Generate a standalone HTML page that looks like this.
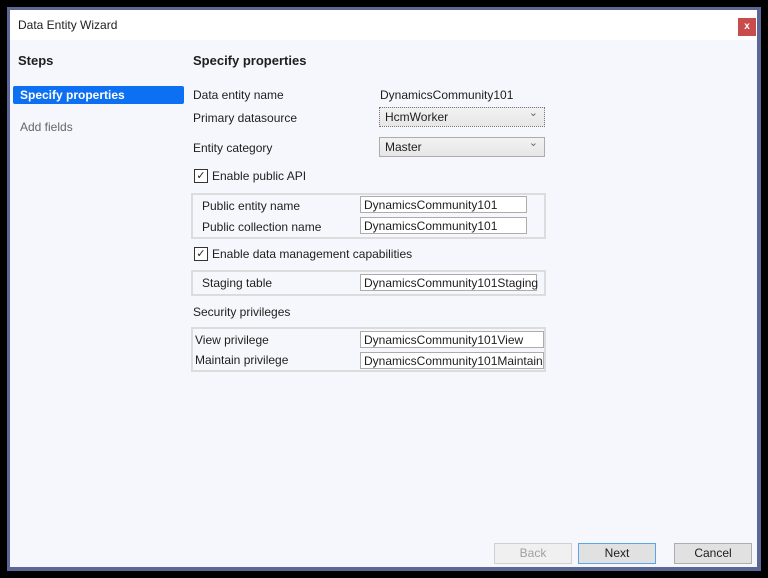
<!DOCTYPE html>
<html><head><style>
body{margin:0;width:768px;height:578px;background:#000;font-family:"Liberation Sans",sans-serif;font-size:12px;color:#1e1e1e;position:relative;overflow:hidden}
.a{position:absolute;white-space:nowrap}
.frame{position:absolute;left:7px;top:7px;width:754px;height:564px;background:#5b6896}
.win{position:absolute;left:10px;top:10px;width:747px;height:557px;background:#f5f7fc}
.title{position:absolute;left:10px;top:10px;width:747px;height:30px;background:#fff}
.inp{position:absolute;background:#fff;border:1px solid #acacac;box-sizing:border-box;padding:1px 0 0 3px;height:17px;font-size:12px;line-height:14px}
.grp{position:absolute;border:2px solid #dcdcdc;box-sizing:border-box}
.dd{position:absolute;background:linear-gradient(#f2f2f2,#e6e6e6);border:1px solid #acacac;box-sizing:border-box;padding:2px 0 0 5px;font-size:12px}
.dd:after{content:"⌄";position:absolute;right:6px;top:-2px;font-size:11px;color:#666}
.cb{position:absolute;width:12px;height:12px;border:1px solid #333;background:#fff;font-size:11px;line-height:12px;text-align:center}
.btn{position:absolute;height:21px;box-sizing:border-box;border:1px solid #adadad;background:#e1e1e1;text-align:center;line-height:19px;font-size:12px}
b{font-weight:bold}
</style></head><body>
<div class="frame"></div>
<div class="win"></div>
<div class="title"></div>
<div class="a" style="left:18px;top:18px">Data Entity Wizard</div>
<div class="a" style="left:738px;top:18px;width:18px;height:18px;background:#c94c4c;color:#fff;font-size:10px;text-align:center;line-height:17px;font-weight:bold">x</div>

<div class="a" style="left:18px;top:53px;font-size:13px"><b>Steps</b></div>
<div class="a" style="left:13px;top:86px;width:171px;height:18px;background:#0d6ff2;border-radius:2px"></div>
<div class="a" style="left:20px;top:88px;color:#fff;font-weight:bold">Specify properties</div>
<div class="a" style="left:20px;top:120px;color:#666">Add fields</div>

<div class="a" style="left:193px;top:53px;font-size:13px"><b>Specify properties</b></div>
<div class="a" style="left:193px;top:88px">Data entity name</div>
<div class="a" style="left:380px;top:88px">DynamicsCommunity101</div>
<div class="a" style="left:193px;top:111px">Primary datasource</div>
<div class="dd" style="left:379px;top:107px;width:166px;height:20px;border:1px dotted #777">HcmWorker</div>
<div class="a" style="left:193px;top:141px">Entity category</div>
<div class="dd" style="left:379px;top:137px;width:166px;height:20px">Master</div>

<div class="cb" style="left:194px;top:169px">✓</div>
<div class="a" style="left:212px;top:169px">Enable public API</div>
<div class="grp" style="left:191px;top:193px;width:355px;height:46px"></div>
<div class="a" style="left:202px;top:199px">Public entity name</div>
<div class="inp" style="left:360px;top:196px;width:167px">DynamicsCommunity101</div>
<div class="a" style="left:202px;top:220px">Public collection name</div>
<div class="inp" style="left:360px;top:217px;width:167px">DynamicsCommunity101</div>

<div class="cb" style="left:194px;top:247px">✓</div>
<div class="a" style="left:212px;top:247px">Enable data management capabilities</div>
<div class="grp" style="left:191px;top:270px;width:355px;height:26px"></div>
<div class="a" style="left:202px;top:276px">Staging table</div>
<div class="inp" style="left:360px;top:274px;width:177px">DynamicsCommunity101Staging</div>

<div class="a" style="left:193px;top:305px">Security privileges</div>
<div class="grp" style="left:191px;top:327px;width:355px;height:45px"></div>
<div class="a" style="left:195px;top:333px">View privilege</div>
<div class="inp" style="left:360px;top:331px;width:184px">DynamicsCommunity101View</div>
<div class="a" style="left:195px;top:353px">Maintain privilege</div>
<div class="inp" style="left:360px;top:352px;width:184px">DynamicsCommunity101Maintain</div>

<div class="btn" style="left:494px;top:543px;width:78px;color:#a0a0a0;background:#f0f0f0;border-color:#d0d0d0">Back</div>
<div class="btn" style="left:578px;top:543px;width:78px;border-color:#5aa5e8">Next</div>
<div class="btn" style="left:674px;top:543px;width:78px">Cancel</div>
</body></html>
